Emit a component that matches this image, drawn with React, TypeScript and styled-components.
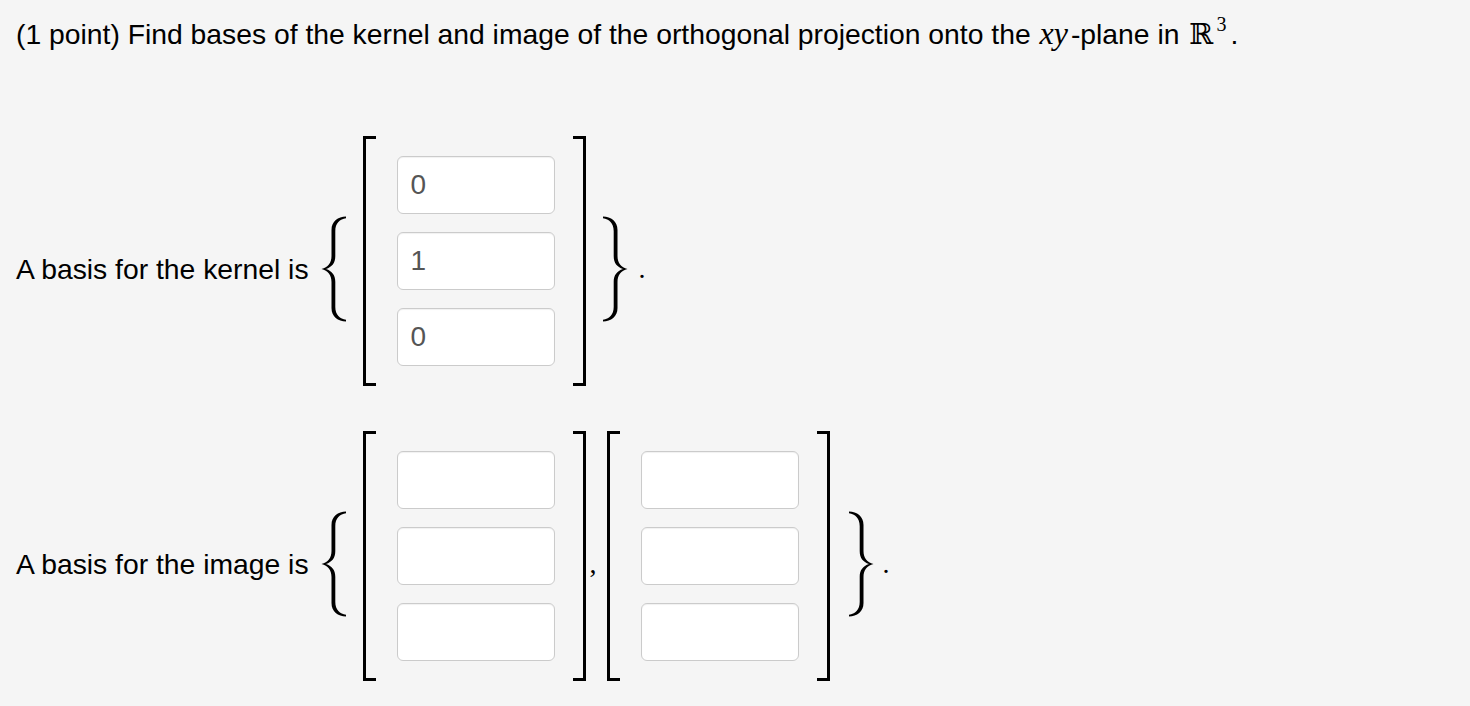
import React from "react";
import styled, { createGlobalStyle } from "styled-components";

const Global = createGlobalStyle`
  html, body {
    margin: 0;
    padding: 0;
    background: #f5f5f5;
  }
  body {
    font-family: "Liberation Sans", Arial, Helvetica, sans-serif;
    color: #000;
  }
`;

const Page = styled.div`
  padding: 16px 16px 0 16px;
  box-sizing: border-box;
  width: 1470px;
  height: 706px;
  overflow: hidden;
`;

const Prompt = styled.div`
  font-size: 28.3px;
  line-height: 34px;
  white-space: nowrap;
`;

const MathVar = styled.span`
  font-family: "Liberation Serif", "Times New Roman", serif;
  font-style: italic;
  font-size: 32px;
  margin-left: 1px;
  margin-right: 3px;
`;

const Reals = styled.span`
  font-family: "DejaVu Serif", "Liberation Serif", serif;
  font-size: 29px;
  margin-left: 2px;
`;

const Sup = styled.sup`
  font-family: "Liberation Serif", "Times New Roman", serif;
  font-size: 20px;
  vertical-align: 0.65em;
  line-height: 0;
  margin-left: 3px;
  margin-right: 4px;
`;

const Section = styled.div<{ $top: number }>`
  display: flex;
  align-items: center;
  margin-top: ${(p) => p.$top}px;
`;

const Label = styled.span`
  font-size: 28.3px;
  line-height: 34px;
  white-space: nowrap;
  margin-top: 15px;
  margin-right: 12px;
`;

const BraceSvg = styled.svg<{ $gapL: number; $gapR: number }>`
  display: block;
  width: 25px;
  height: 106px;
  margin-top: 15px;
  margin-left: ${(p) => p.$gapL}px;
  margin-right: ${(p) => p.$gapR}px;
  flex: none;
`;

const Punct = styled.span<{ $ml: number; $mr: number }>`
  font-family: "Liberation Serif", "Times New Roman", serif;
  font-size: 28px;
  line-height: 34px;
  margin-top: 15px;
  margin-left: ${(p) => p.$ml}px;
  margin-right: ${(p) => p.$mr}px;
`;

const Matrix = styled.div`
  display: flex;
  align-items: stretch;
  flex: none;
`;

const Bracket = styled.div<{ $side: "left" | "right" }>`
  width: 10px;
  border-top: 3px solid #000;
  border-bottom: 3px solid #000;
  ${(p) =>
    p.$side === "left"
      ? "border-left: 3px solid #000;"
      : "border-right: 3px solid #000;"}
`;

const Column = styled.div`
  display: flex;
  flex-direction: column;
  gap: 18px;
  padding: 20px 18px 20px 21px;
`;

const Field = styled.input`
  box-sizing: border-box;
  display: block;
  width: 158px;
  height: 58px;
  margin: 0;
  padding: 0 13px;
  border: 1.5px solid #cbcbcb;
  border-radius: 6px;
  background: #fff;
  box-shadow: inset 0 1px 1px rgba(0, 0, 0, 0.06);
  font-family: "Liberation Sans", Arial, Helvetica, sans-serif;
  font-size: 28px;
  color: #555;
  outline: none;
`;

const Brace: React.FC<{ side: "left" | "right"; gapL: number; gapR: number }> = ({
  side,
  gapL,
  gapR,
}) => (
  <BraceSvg viewBox="0 0 25 106" $gapL={gapL} $gapR={gapR}>
    <path
      transform={side === "right" ? "translate(25,0) scale(-1,1)" : undefined}
      fill="#000"
      d="M25,0.5 C17,1 10.5,5 10.5,14 L10.5,40 C10.5,47 7,51.5 0.5,53 C7,54.5 10.5,59 10.5,66 L10.5,92 C10.5,101 17,105 25,105.5 L25,103.8 C19,103 14.3,99 14.3,91 L14.3,66 C14.3,59 11,55 5,53 C11,51 14.3,47 14.3,40 L14.3,15 C14.3,7 19,3 25,2.2 Z"
    />
  </BraceSvg>
);

const Vector: React.FC<{ values: string[] }> = ({ values }) => (
  <Matrix>
    <Bracket $side="left" />
    <Column>
      {values.map((v, i) => (
        <Field key={i} defaultValue={v} />
      ))}
    </Column>
    <Bracket $side="right" />
  </Matrix>
);

export default function App() {
  return (
    <Page>
      <Global />
      <Prompt>
        (1 point) Find bases of the kernel and image of the orthogonal projection onto the{" "}
        <MathVar>xy</MathVar>-plane in <Reals>ℝ</Reals>
        <Sup>3</Sup>.
      </Prompt>
      <Section $top={85}>
        <Label>A basis for the kernel is</Label>
        <Brace side="left" gapL={0} gapR={17} />
        <Vector values={["0", "1", "0"]} />
        <Brace side="right" gapL={17} gapR={0} />
        <Punct $ml={11} $mr={0}>.</Punct>
      </Section>
      <Section $top={45}>
        <Label>A basis for the image is</Label>
        <Brace side="left" gapL={0} gapR={17} />
        <Vector values={["", "", ""]} />
        <Punct $ml={4} $mr={10}>,</Punct>
        <Vector values={["", "", ""]} />
        <Brace side="right" gapL={19} gapR={0} />
        <Punct $ml={9} $mr={0}>.</Punct>
      </Section>
    </Page>
  );
}
